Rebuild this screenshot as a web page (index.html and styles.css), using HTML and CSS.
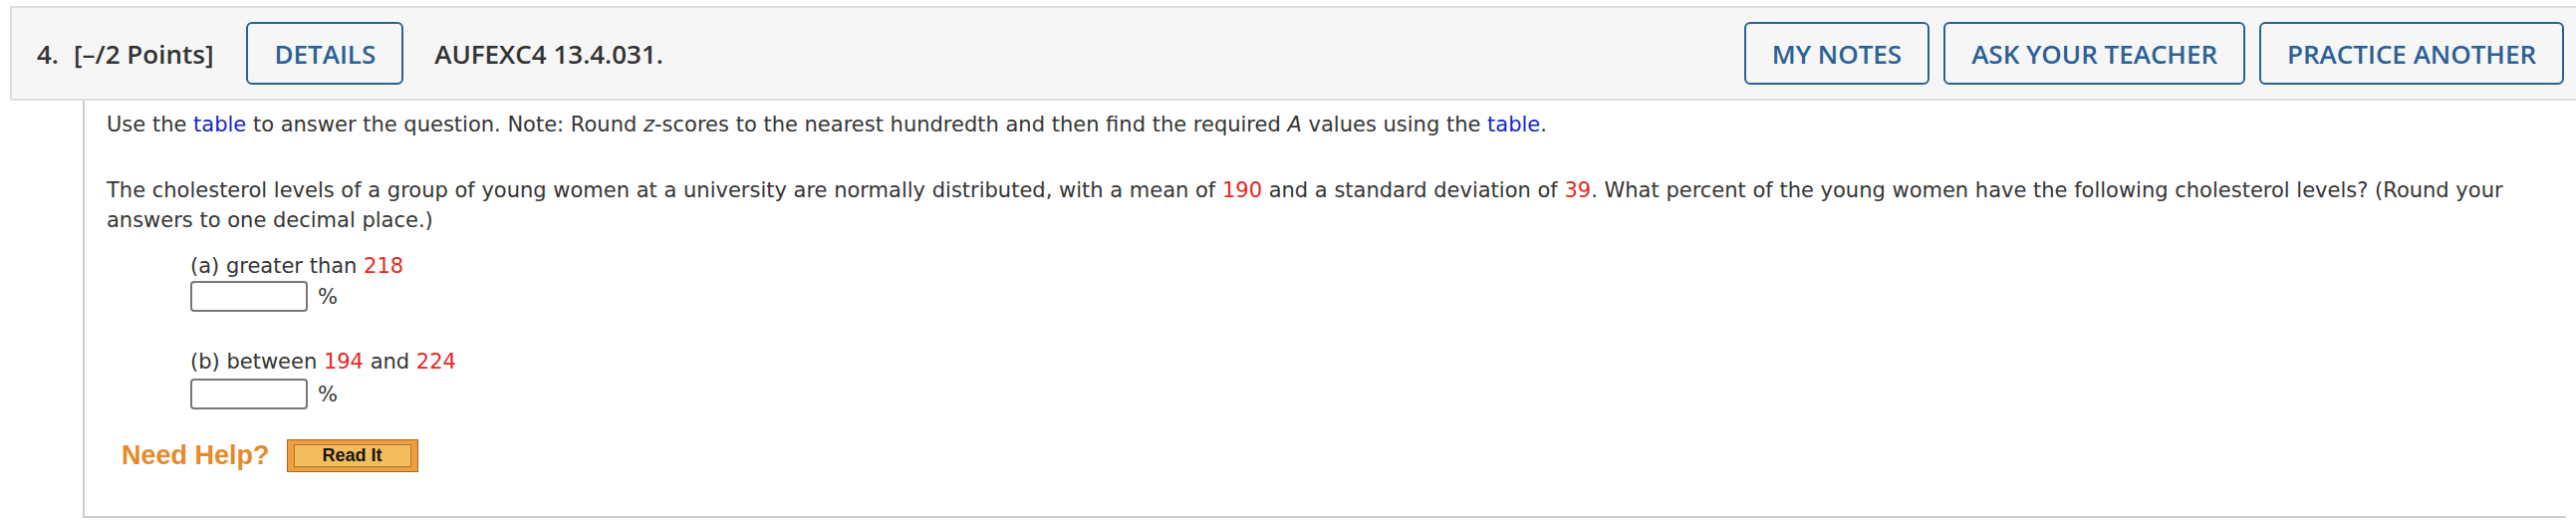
FILE: index.html
```html
<!DOCTYPE html>
<html lang="en">
<head>
<meta charset="utf-8">
<title>Question 4</title>
<link rel="stylesheet" href="styles.css">
</head>
<body>
<div class="question">
  <div class="q-header">
    <span class="q-num">4.</span>
    <span class="q-points">[–/2 Points]</span>
    <button class="hbtn">DETAILS</button>
    <span class="q-code">AUFEXC4 13.4.031.</span>
    <div class="q-actions">
      <button class="hbtn">MY NOTES</button>
      <button class="hbtn">ASK YOUR TEACHER</button>
      <button class="hbtn">PRACTICE ANOTHER</button>
    </div>
  </div>
  <div class="q-body">
    <p class="note">Use the <a class="link" href="#">table</a> to answer the question. Note: Round <i>z</i>-scores to the nearest hundredth and then find the required <i>A</i> values using the <a class="link" href="#">table</a>.</p>
    <p class="stem">The cholesterol levels of a group of young women at a university are normally distributed, with a mean of <span class="num">190</span> and a standard deviation of <span class="num">39</span>. What percent of the young women have the following cholesterol levels? (Round your answers to one decimal place.)</p>
    <div class="part">
      <div class="part-label">(a) greater than <span class="num">218</span></div>
      <div class="answer"><span class="ansbox"></span><span class="pct">%</span></div>
    </div>
    <div class="part part-b">
      <div class="part-label">(b) between <span class="num">194</span> and <span class="num">224</span></div>
      <div class="answer"><span class="ansbox"></span><span class="pct">%</span></div>
    </div>
    <div class="help">
      <span class="help-label">Need Help?</span>
      <button class="readit"><span class="readit-inner">Read It</span></button>
    </div>
  </div>
</div>
</body>
</html>
```
FILE: styles.css
```css
html, body {
  margin: 0;
  padding: 0;
  background: #ffffff;
}

.question {
  padding-top: 6px;
}

.q-header {
  margin-left: 10px;
  height: 91px;
  display: flex;
  align-items: center;
  padding: 0 12px 0 25px;
  background: #f6f6f6;
  border: 2px solid #dedede;
  border-right: none;
  font-family: "Open Sans", "Liberation Sans", sans-serif;
  font-weight: 600;
  font-size: 26px;
  color: #333333;
}

.q-num {
  margin-right: 15px;
}

.q-points {
  margin-right: 33px;
}

.q-code {
  margin-left: 31px;
}

.q-actions {
  margin-left: auto;
  display: flex;
  gap: 14px;
}

.hbtn {
  height: 63px;
  padding: 0 26px;
  background: transparent;
  border: 2px solid #2b6196;
  border-radius: 6px;
  color: #2b6196;
  font-family: "Open Sans", "Liberation Sans", sans-serif;
  font-weight: 600;
  font-size: 26px;
  cursor: pointer;
}

.q-body {
  margin-left: 83px;
  margin-right: 10px;
  border-left: 2px solid #cccccc;
  border-bottom: 2px solid #cccccc;
  padding: 9px 0 44px 22px;
  font-family: "DejaVu Sans", Verdana, sans-serif;
  font-size: 21px;
  line-height: 30px;
  color: #363636;
}

.q-body p {
  margin: 0;
}

.note {
  margin-bottom: 36px !important;
}

.stem {
  margin-bottom: 16px !important;
}

.link {
  color: #1428c8;
  text-decoration: none;
}

.num {
  color: #e8281f;
}

.part {
  margin-left: 84px;
}

.part-b {
  margin-top: 35px;
}

.answer {
  display: flex;
  align-items: center;
  height: 31px;
}

.part-b .answer {
  margin-top: 2px;
}

.ansbox {
  width: 114px;
  height: 27px;
  border: 2px solid #777777;
  border-radius: 4px;
  background: #ffffff;
}

.pct {
  margin-left: 10px;
}

.help {
  margin-top: 30px;
  margin-left: 15px;
  display: flex;
  align-items: center;
  gap: 17px;
}

.help-label {
  font-family: "Liberation Sans", Arial, sans-serif;
  font-weight: 700;
  font-size: 27px;
  color: #e58a2c;
  line-height: 33px;
}

.readit {
  width: 132px;
  height: 33px;
  padding: 4px 6px;
  border: 1px solid #9c6628;
  background: #ee9f3c;
  box-sizing: border-box;
  cursor: pointer;
}

.readit-inner {
  display: block;
  height: 23px;
  box-sizing: border-box;
  border: 1px solid #ad763a;
  background: #f3bd5b;
  font-family: "Liberation Sans", Arial, sans-serif;
  font-weight: 700;
  font-size: 18px;
  line-height: 21px;
  color: #151515;
  text-align: center;
}
```
